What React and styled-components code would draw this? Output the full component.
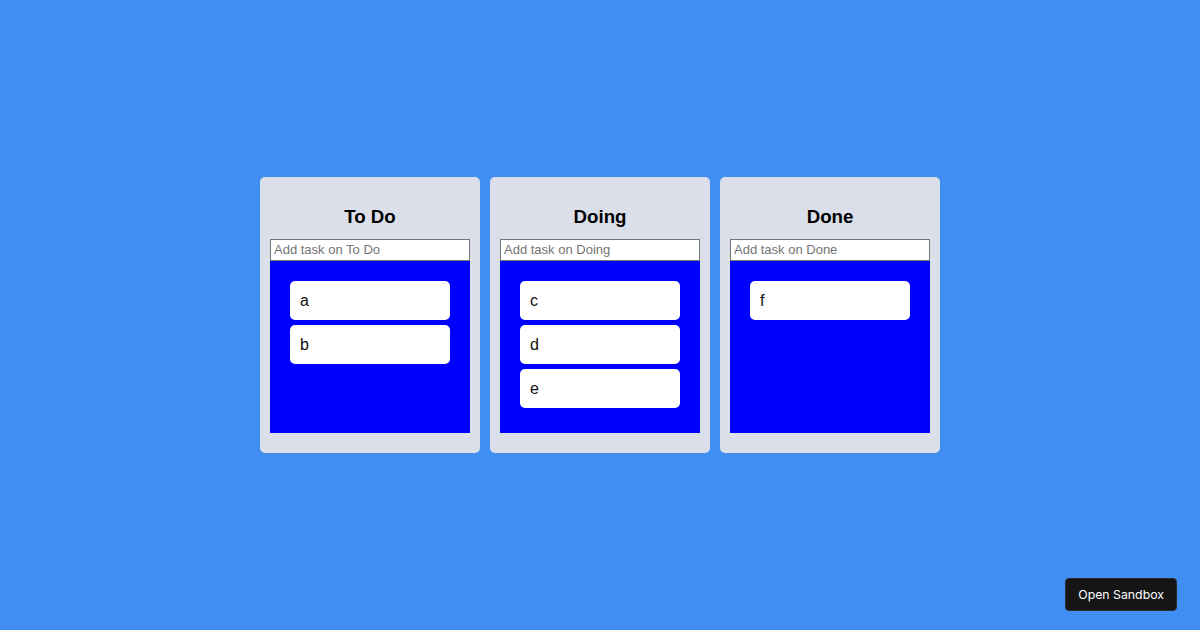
import React, { useState } from 'react';
import styled, { createGlobalStyle } from 'styled-components';

const GlobalStyle = createGlobalStyle`
  html, body, #root {
    margin: 0;
    height: 100%;
  }
  body {
    background: #418ef2;
    font-family: "Liberation Sans", Arial, sans-serif;
  }
`;

const Page = styled.div`
  height: 100%;
  display: flex;
  justify-content: center;
  align-items: center;
`;

const Board = styled.div`
  display: flex;
  gap: 10px;
`;

const Column = styled.div`
  width: 200px;
  padding: 10px 10px 20px;
  background: #dadfe9;
  border-radius: 5px;
`;

const Title = styled.h3`
  margin: 0;
  padding-top: 19px;
  margin-bottom: 11px;
  height: 22px;
  line-height: 22px;
  font-size: 18.7px;
  font-weight: bold;
  text-align: center;
  color: #000;
`;

const TaskInput = styled.input`
  display: block;
  box-sizing: border-box;
  width: 100%;
  height: 22px;
  margin: 0;
  padding: 0 3px 1px;
  border: 1px solid #767676;
  font-family: "Liberation Sans", Arial, sans-serif;
  font-size: 13px;
  background: #fff;

  &::placeholder {
    color: #757575;
  }
`;

const DropZone = styled.div`
  box-sizing: border-box;
  height: 172px;
  padding: 20px;
  background: #0000ff;
  display: flex;
  flex-direction: column;
  gap: 5px;
`;

const Task = styled.div`
  box-sizing: border-box;
  height: 39px;
  padding: 0 10px;
  display: flex;
  align-items: center;
  background: #fff;
  border-radius: 5px;
  font-size: 16px;
  color: #111;
`;

const SandboxButton = styled.button`
  position: fixed;
  right: 23px;
  bottom: 19px;
  height: 33px;
  padding: 0 12px;
  background: #151515;
  color: #fff;
  border: 1px solid #2c2c2c;
  border-radius: 4px;
  font-family: Inter, "Liberation Sans", sans-serif;
  font-size: 12.3px;
`;

const initial = [
  { name: 'To Do', tasks: ['a', 'b'] },
  { name: 'Doing', tasks: ['c', 'd', 'e'] },
  { name: 'Done', tasks: ['f'] },
];

export default function App() {
  const [columns] = useState(initial);

  return (
    <>
      <GlobalStyle />
      <Page>
        <Board>
          {columns.map((col) => (
            <Column key={col.name}>
              <Title>{col.name}</Title>
              <TaskInput placeholder={`Add task on ${col.name}`} />
              <DropZone>
                {col.tasks.map((t) => (
                  <Task key={t}>{t}</Task>
                ))}
              </DropZone>
            </Column>
          ))}
        </Board>
      </Page>
      <SandboxButton>Open Sandbox</SandboxButton>
    </>
  );
}
